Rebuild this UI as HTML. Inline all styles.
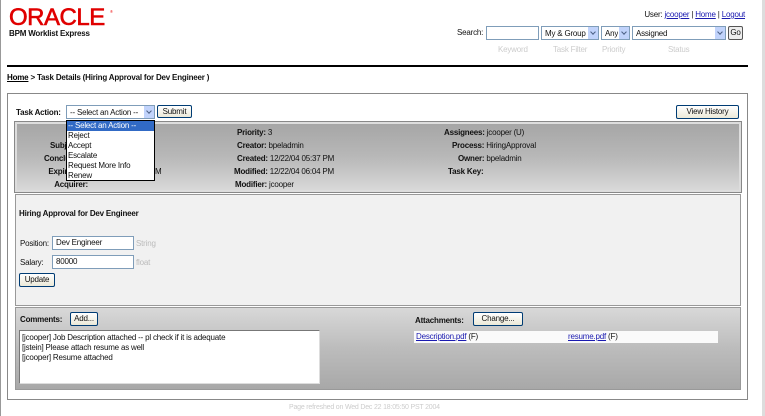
<!DOCTYPE html>
<html><head><style>
*{margin:0;padding:0;box-sizing:border-box}
body{width:765px;height:416px;background:#fff;font-family:"Liberation Sans",sans-serif;font-size:8px;letter-spacing:-0.2px;color:#111;position:relative;overflow:hidden}
.a{position:absolute;white-space:nowrap}
b{font-weight:bold}
a{color:#1a1ab0;text-decoration:underline}
.inp{position:absolute;background:#fff;border:1px solid #7f9db9;white-space:nowrap}
.sel{position:absolute;background:#fff;border:1px solid #7f9db9;padding:1px 3px;line-height:11px;white-space:nowrap;overflow:hidden}
.sel i{position:absolute;right:0;top:0;bottom:0;width:11px;background:#c1d3fb;border-left:1px solid #fff}
.sel i:after{content:"";position:absolute;left:3px;top:3px;width:3px;height:3px;border-right:1.5px solid #4d6185;border-bottom:1.5px solid #4d6185;transform:rotate(45deg)}
.btn{position:absolute;background:linear-gradient(#fff,#ece9d8);border:1px solid #003c74;border-radius:2px;text-align:center;line-height:11px;white-space:nowrap}
.lbl{position:absolute;text-align:right;font-weight:bold;white-space:nowrap}
.grad{background:linear-gradient(#a6a6a6,#b8b8b8 50%,#d8d8d8)}
</style></head><body>
<div style="position:absolute;left:0;top:0;width:1px;height:416px;background:#999"></div>
<div style="position:absolute;right:0;top:0;width:3px;height:416px;background:#ddd"></div>
<div class="a" style="left:9px;top:4px;font:24px 'Liberation Sans',sans-serif;color:#e00000;letter-spacing:-0.5px;-webkit-text-stroke:0.6px #e00000">ORACLE</div>
<div class="a" style="left:110px;top:9px;font-size:4px;color:#e00">®</div>
<div class="a" style="left:9px;top:29px;font-weight:bold;font-size:8px">BPM Worklist Express</div>
<div class="a" style="right:20px;top:10px">User: <a>jcooper</a> | <a>Home</a> | <a>Logout</a></div>
<div class="a" style="left:457px;top:28px">Search:</div>
<div class="inp" style="left:486px;top:26px;width:53px;height:14px"></div>
<div class="sel" style="left:541px;top:26px;width:58px;height:14px">My &amp; Group<i></i></div>
<div class="sel" style="left:601px;top:26px;width:29px;height:14px">Any<i></i></div>
<div class="sel" style="left:632px;top:26px;width:94px;height:14px">Assigned<i></i></div>
<div class="btn" style="left:728px;top:26px;width:15px;height:14px;border-color:#555;background:#eee">Go</div>
<div class="a" style="left:498px;top:45px;color:#ccc">Keyword</div>
<div class="a" style="left:553px;top:45px;color:#ccc">Task Filter</div>
<div class="a" style="left:602px;top:45px;color:#ccc">Priority</div>
<div class="a" style="left:668px;top:45px;color:#ccc">Status</div>
<div style="position:absolute;left:7px;top:65px;width:741px;height:2px;background:#000"></div>
<div class="a" style="left:7px;top:73px;font-weight:bold"><a style="color:#000">Home</a> &gt; Task Details (Hiring Approval for Dev Engineer )</div>

<div style="position:absolute;left:7px;top:93px;width:741px;height:307px;border:1px solid #888"></div>
<div class="a" style="left:16px;top:108px;font-weight:bold">Task Action:</div>
<div class="btn" style="left:157px;top:105px;width:35px;height:13px">Submit</div>
<div class="btn" style="left:676px;top:105px;width:63px;height:14px">View History</div>

<div class="grad" style="position:absolute;left:15px;top:122px;width:726px;height:70px;border:2px solid #ddd;outline:1px solid #888"></div>
<div class="lbl" style="left:10px;top:141px;width:70px">Subject:</div>
<div class="lbl" style="left:10px;top:154px;width:78px">Conclusion:</div>
<div class="lbl" style="left:10px;top:167px;width:78px">Expiration:</div>
<div class="lbl" style="left:20px;top:180px;width:68px">Acquirer:</div>
<div class="a" style="left:155px;top:167px">M</div>
<div class="a" style="left:237px;top:128px"><b>Priority:</b> 3</div>
<div class="a" style="left:237px;top:141px"><b>Creator:</b> bpeladmin</div>
<div class="a" style="left:237px;top:154px"><b>Created:</b> 12/22/04 05:37 PM</div>
<div class="a" style="left:234px;top:167px"><b>Modified:</b> 12/22/04 06:04 PM</div>
<div class="a" style="left:235px;top:180px"><b>Modifier:</b> jcooper</div>
<div class="a" style="left:444px;top:128px"><b>Assignees:</b> jcooper (U)</div>
<div class="a" style="left:452px;top:141px"><b>Process:</b> HiringApproval</div>
<div class="a" style="left:458px;top:154px"><b>Owner:</b> bpeladmin</div>
<div class="a" style="left:448px;top:167px"><b>Task Key:</b></div>

<div style="position:absolute;left:15px;top:194px;width:726px;height:112px;background:#f1f1f1;border:1px solid #999"></div>
<div class="a" style="left:19px;top:209px;font-weight:bold">Hiring Approval for Dev Engineer</div>
<div class="a" style="left:20px;top:239px">Position:</div>
<div class="inp" style="left:52px;top:236px;width:82px;height:14px;padding:1px 3px">Dev Engineer</div>
<div class="a" style="left:136px;top:239px;color:#bbb">String</div>
<div class="a" style="left:20px;top:258px">Salary:</div>
<div class="inp" style="left:52px;top:255px;width:82px;height:14px;padding:1px 3px">80000</div>
<div class="a" style="left:136px;top:258px;color:#bbb">float</div>
<div class="btn" style="left:19px;top:273px;width:36px;height:14px">Update</div>

<div style="position:absolute;left:15px;top:307px;width:726px;height:83px;border:1px solid #999;background:linear-gradient(#d8d8d8,#bcbcbc 50%,#a8a8a8)"></div>
<div class="a" style="left:20px;top:315px;font-weight:bold">Comments:</div>
<div class="btn" style="left:70px;top:312px;width:28px;height:14px">Add...</div>
<div style="position:absolute;left:19px;top:330px;width:301px;height:54px;background:#fff;border:1px solid #777;border-right-color:#ddd;border-bottom-color:#ddd;padding:2px 2px;line-height:10px;white-space:nowrap">[jcooper] Job Description attached -- pl check if it is adequate<br>[jstein] Please attach resume as well<br>[jcooper] Resume attached</div>
<div class="a" style="left:415px;top:316px;font-weight:bold">Attachments:</div>
<div class="btn" style="left:473px;top:312px;width:50px;height:14px">Change...</div>
<div style="position:absolute;left:414px;top:331px;width:304px;height:12px;background:#fafafa"></div>
<div class="a" style="left:416px;top:332px"><a>Description.pdf</a> (F)</div>
<div class="a" style="left:568px;top:332px"><a>resume.pdf</a> (F)</div>
<div class="a" style="left:289px;top:404px;color:#ccc;font-size:7px">Page refreshed on Wed Dec 22 18:05:50 PST 2004</div>

<div class="sel" style="left:66px;top:105px;width:89px;height:14px">-- Select an Action --<i></i></div>
<div style="position:absolute;left:66px;top:120px;width:89px;height:61px;background:#fff;border:1px solid #000;line-height:10px;white-space:nowrap">
<div style="background:#316ac5;color:#fff;padding-left:1px">-- Select an Action --</div>
<div style="padding-left:1px">Reject<br>Accept<br>Escalate<br>Request More Info<br>Renew</div></div>
</body></html>
